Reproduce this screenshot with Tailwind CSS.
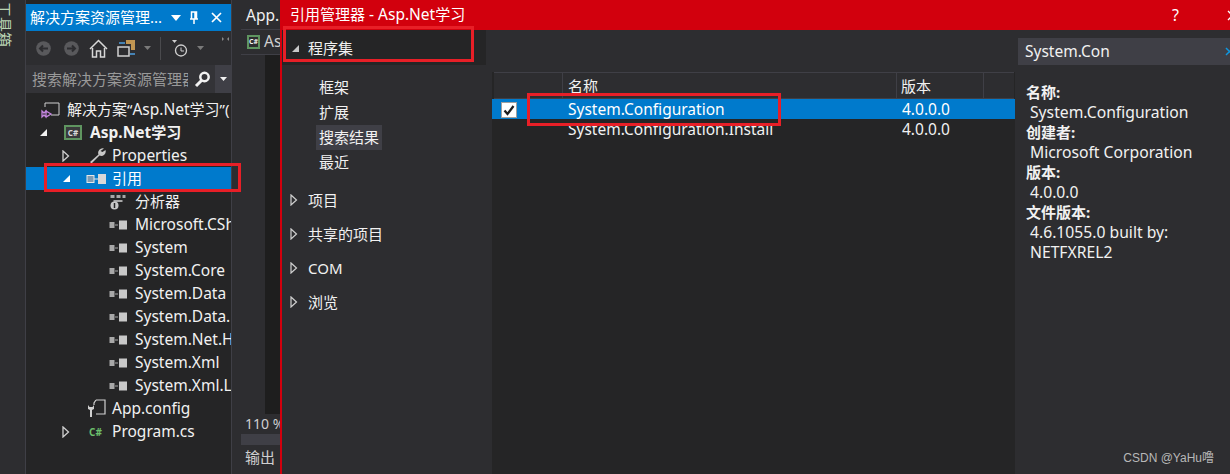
<!DOCTYPE html>
<html lang="zh-CN">
<head>
    <meta charset="UTF-8">
    <title>引用管理器</title>
    <script src="https://cdn.jsdelivr.net/npm/@tailwindcss/browser@4"></script>
</head>
<body class="w-[1230px] h-[474px] overflow-hidden bg-[#2d2d30] text-[#f1f1f1] text-[15.5px] font-['Noto_Sans','Noto_Sans_CJK_SC',sans-serif]">
<div class="relative flex h-[474px]">

    <!-- toolbox strip -->
    <div class="w-[26px] shrink-0 border-r border-[#3f3f46] overflow-hidden">
        <div class="-ml-[4px] pt-[2px] w-[18px] text-[#b9d4b4] text-[15px] leading-[18px] [writing-mode:vertical-rl] [text-orientation:sideways]">工具箱</div>
    </div>

    <!-- solution explorer -->
    <div class="w-[206px] shrink-0 flex flex-col border-r border-[#3f3f46] bg-[#252526] overflow-hidden [&_svg]:shrink-0">
        <div class="h-[27px] mt-[4px] shrink-0 bg-[#007acc] flex items-center pl-[4px] pr-[9px] text-white">
            <span class="flex-1 text-[15px] whitespace-nowrap">解决方案资源管理...</span>
            <svg width="10" height="6" class="mr-[8px]"><path d="M0 0h10L5 6z" fill="#fff"/></svg>
            <svg width="10" height="14" class="mr-[12px]" viewBox="0 0 10 14"><path d="M2.500 1h5v7h-5zM1 8h8M5 8v5M6 1v7" stroke="#fff" stroke-width="1.500" fill="none"/></svg>
            <svg width="11" height="11"><path d="M1 1l9 9M10 1l-9 9" stroke="#fff" stroke-width="1.700"/></svg>
        </div>
        <div class="h-[34px] shrink-0 bg-[#2d2d30] flex items-center pl-[10px]">
            <svg width="15" height="15"><circle cx="7.500" cy="7.500" r="7.300" fill="#59595c"/><path d="M12 7.500H4M7 4.500l-3 3 3 3" stroke="#2d2d30" stroke-width="2" fill="none"/></svg>
            <svg width="15" height="15" class="ml-[13px]"><circle cx="7.500" cy="7.500" r="7.300" fill="#59595c"/><path d="M3 7.500h8M8 4.500l3 3-3 3" stroke="#2d2d30" stroke-width="2" fill="none"/></svg>
            <svg width="19" height="19" class="ml-[10px]" viewBox="0 0 19 19"><path d="M1 10l8.500-8.500L18 10" stroke="#d8d8d8" stroke-width="1.500" fill="none"/><path d="M3.500 9v9h4v-6h4v6h4V9" stroke="#d8d8d8" stroke-width="1.500" fill="none"/></svg>
            <svg width="19" height="18" class="ml-[9px]" viewBox="0 0 19 18"><path d="M1 8h11v9H1z" stroke="#d0d0d0" stroke-width="1.500" fill="none"/><path d="M9 1h9v10h-4V5H9z" fill="#c09552"/><path d="M2 4h6M13 15h5" stroke="#4d9fe0" stroke-width="1.500"/></svg>
            <svg width="7" height="4" class="ml-[8px]"><path d="M0 0h7L3.500 4z" fill="#7a7a7a"/></svg>
            <div class="w-px h-[23px] bg-[#4a4a4d] ml-[9px]"></div>
            <svg width="19" height="19" class="ml-[10px]" viewBox="0 0 19 19"><circle cx="10" cy="11.500" r="5.500" stroke="#d0d0d0" stroke-width="1.300" fill="none"/><path d="M10 8.500v3.500h3" stroke="#d0d0d0" fill="none"/><path d="M1 1h5L3.500 4z" fill="#d0d0d0"/></svg>
            <svg width="7" height="4" class="ml-[7px]"><path d="M0 0h7L3.500 4z" fill="#7a7a7a"/></svg>
            <svg width="7" height="5" class="ml-[18px] -mt-[18px]"><path d="M0 0l2 2-2 2zM7 0L5 2l2 2z" fill="#8a8a8a"/></svg>
        </div>
        <div class="h-[28px] shrink-0 bg-[#333337] flex items-center">
            <span class="w-[162px] pl-[6px] overflow-hidden whitespace-nowrap text-[15px] text-[#999999]">搜索解决方案资源管理器</span>
            <div class="w-[25px] ml-[2px] h-full flex items-center justify-center">
                <svg width="17" height="17" viewBox="0 0 17 17"><circle cx="10.500" cy="6" r="4.200" stroke="#f1f1f1" stroke-width="2.500" fill="none"/><path d="M7.500 9.500L2 15" stroke="#f1f1f1" stroke-width="3"/></svg>
            </div>
            <div class="flex-1 h-full bg-[#3f3f46] flex items-center justify-center">
                <svg width="7" height="4"><path d="M0 0h7L3.500 4z" fill="#f1f1f1"/></svg>
            </div>
        </div>

        <div class="pt-[5px] flex flex-col whitespace-nowrap">
            <div class="h-[23px] flex items-center pl-[15px] gap-[6px]">
                <svg width="20" height="18" viewBox="0 0 20 18"><path d="M4 6V2h14v12H10" stroke="#d0d0d0" fill="none"/><path d="M1 10l2 2 2-2v6l-2-2-2 2zM5 10l5 3-5 3z" fill="none" stroke="#c586e0" stroke-width="1.300"/></svg>
                <span><span class="text-[15px]">解决方案“</span>Asp.Net<span class="text-[15px]">学习”(</span></span>
            </div>
            <div class="h-[23px] flex items-center pl-[13px]">
                <svg width="9" height="9"><path d="M8 1v7H1z" fill="#f1f1f1"/></svg>
                <div class="ml-[16px] w-[18px] h-[15px] border-2 border-[#5f9560] bg-[#3a3a3c] text-[8px] font-bold leading-[11px] text-center text-[#d8d8d8]">C#</div>
                <b class="ml-[8px]">Asp.Net<span class="text-[15px]">学习</span></b>
            </div>
            <div class="h-[23px] flex items-center pl-[36px]">
                <svg width="8" height="12"><path d="M1 1l5.500 5L1 11z" fill="none" stroke="#d0d0d0" stroke-width="1.300"/></svg>
                <svg width="18" height="18" viewBox="0 0 18 18" class="ml-[18px]"><path d="M16 1.500a4.500 4.500 0 0 0-5.500 6L2 15l1.500 1.500 8-8a4.500 4.500 0 0 0 6-5.500l-3 2-2-1z" fill="#c8c8c8"/></svg>
                <span class="ml-[6px]">Properties</span>
            </div>
            <div class="h-[23px] flex items-center pl-[36px] bg-[#007acc] text-white">
                <svg width="9" height="9"><path d="M8 1v7H1z" fill="#fff"/></svg>
                <svg width="20" height="12" viewBox="0 0 20 12" class="ml-[15px]"><rect x="1" y="2.500" width="7" height="7" fill="#7d9cb4" stroke="#e8e8e8"/><path d="M8 6h4" stroke="#e8e8e8"/><rect x="12" y="1" width="8" height="10" fill="#d8d8d8"/></svg>
                <span class="ml-[6px] text-[15px]">引用</span>
            </div>
            <div class="h-[23px] flex items-center pl-[83px]">
                <svg width="18" height="16" viewBox="0 0 17 16"><path d="M1 1h4v3H1zM7 1h4v3H7zM13 1h3v3h-3zM4 6h9v2H4z" fill="#a8a8a8"/><circle cx="5" cy="11.500" r="4" fill="#c8c8c8"/><path d="M5 9v5" stroke="#252526" stroke-width="1.500"/></svg>
                <span class="ml-[8px] text-[15px]">分析器</span>
            </div>
            <div class="h-[23px] flex items-center pl-[83px]"><svg width="19" height="10" viewBox="0 0 19 10"><rect x="0.500" y="2" width="5" height="6" fill="#a8a8a8"/><path d="M6 5h3" stroke="#a8a8a8"/><rect x="10" y="0.500" width="8" height="9" fill="#c8c8c8"/></svg><span class="ml-[7px]">Microsoft.CSharp</span></div>
            <div class="h-[23px] flex items-center pl-[83px]"><svg width="19" height="10" viewBox="0 0 19 10"><rect x="0.500" y="2" width="5" height="6" fill="#a8a8a8"/><path d="M6 5h3" stroke="#a8a8a8"/><rect x="10" y="0.500" width="8" height="9" fill="#c8c8c8"/></svg><span class="ml-[7px]">System</span></div>
            <div class="h-[23px] flex items-center pl-[83px]"><svg width="19" height="10" viewBox="0 0 19 10"><rect x="0.500" y="2" width="5" height="6" fill="#a8a8a8"/><path d="M6 5h3" stroke="#a8a8a8"/><rect x="10" y="0.500" width="8" height="9" fill="#c8c8c8"/></svg><span class="ml-[7px]">System.Core</span></div>
            <div class="h-[23px] flex items-center pl-[83px]"><svg width="19" height="10" viewBox="0 0 19 10"><rect x="0.500" y="2" width="5" height="6" fill="#a8a8a8"/><path d="M6 5h3" stroke="#a8a8a8"/><rect x="10" y="0.500" width="8" height="9" fill="#c8c8c8"/></svg><span class="ml-[7px]">System.Data</span></div>
            <div class="h-[23px] flex items-center pl-[83px]"><svg width="19" height="10" viewBox="0 0 19 10"><rect x="0.500" y="2" width="5" height="6" fill="#a8a8a8"/><path d="M6 5h3" stroke="#a8a8a8"/><rect x="10" y="0.500" width="8" height="9" fill="#c8c8c8"/></svg><span class="ml-[7px]">System.Data.DataSet</span></div>
            <div class="h-[23px] flex items-center pl-[83px]"><svg width="19" height="10" viewBox="0 0 19 10"><rect x="0.500" y="2" width="5" height="6" fill="#a8a8a8"/><path d="M6 5h3" stroke="#a8a8a8"/><rect x="10" y="0.500" width="8" height="9" fill="#c8c8c8"/></svg><span class="ml-[7px]">System.Net.Http</span></div>
            <div class="h-[23px] flex items-center pl-[83px]"><svg width="19" height="10" viewBox="0 0 19 10"><rect x="0.500" y="2" width="5" height="6" fill="#a8a8a8"/><path d="M6 5h3" stroke="#a8a8a8"/><rect x="10" y="0.500" width="8" height="9" fill="#c8c8c8"/></svg><span class="ml-[7px]">System.Xml</span></div>
            <div class="h-[23px] flex items-center pl-[83px]"><svg width="19" height="10" viewBox="0 0 19 10"><rect x="0.500" y="2" width="5" height="6" fill="#a8a8a8"/><path d="M6 5h3" stroke="#a8a8a8"/><rect x="10" y="0.500" width="8" height="9" fill="#c8c8c8"/></svg><span class="ml-[7px]">System.Xml.Linq</span></div>
            <div class="h-[23px] flex items-center pl-[61px]">
                <svg width="19" height="19" viewBox="0 0 19 19"><path d="M9 1h9v14H9M9 1L7 4v2" stroke="#d0d0d0" stroke-width="1.200" fill="none"/><path d="M1 6v4l2 1v7h2v-7l2-1V6L5.500 8h-3z" fill="#d0d0d0"/></svg>
                <span class="ml-[6px]">App.config</span>
            </div>
            <div class="h-[23px] flex items-center pl-[36px]">
                <svg width="8" height="12"><path d="M1 1l5.500 5L1 11z" fill="none" stroke="#d0d0d0" stroke-width="1.300"/></svg>
                <b class="ml-[19px] w-[19px] text-[10px] leading-none text-[#6cbf6c]">C#</b>
                <span class="ml-[4px]">Program.cs</span>
            </div>
        </div>
    </div>

    <!-- editor sliver behind the dialog -->
    <div class="w-[9px] shrink-0"></div>
    <div class="w-[39px] shrink-0 flex flex-col overflow-hidden whitespace-nowrap">
        <div class="h-[29px] pt-[4px] pl-[5px]">App.</div>
        <div class="h-[26px] flex items-center border-y border-[#3f3f46] pl-[6px]">
            <span class="w-[15px] h-[14px] border-2 border-[#5f9560] text-[7px] font-bold leading-[10px] text-center">C#</span>
            <span class="ml-[4px] text-[#d0d0d0]">As</span>
        </div>
        <div class="h-[359px] flex">
            <div class="w-[24px]"></div>
            <div class="flex-1 bg-[#1e1e1e]"></div>
        </div>
        <div class="h-[20px] text-[14px] leading-[20px] pl-[4px] text-[#d0d0d0]">110 %</div>
        <div class="h-[11px] bg-[#3f3f46]"></div>
        <div class="flex-1 pl-[4px] pt-[1px] text-[15px] text-[#d0d0d0]">输出</div>
    </div>

    <!-- reference manager dialog -->
    <div class="w-[950px] shrink-0 flex flex-col border-l-2 border-[#d2000d] bg-[#2d2d30]">
        <div class="h-[30px] shrink-0 -ml-[1px] bg-[#d2000d] flex items-center pl-[9px] text-white">
            <span class="flex-1"><span class="text-[15px]">引用管理器</span> - Asp.Net<span class="text-[15px]">学习</span></span>
            <span class="mr-[48px] text-[16px]">?</span>
            <svg width="11" height="11" class="-mr-[8px]"><path d="M1 1l9 9M10 1l-9 9" stroke="#fff" stroke-width="1.300"/></svg>
        </div>
        <div class="flex flex-1 min-h-0">
            <div class="w-[210px] shrink-0 text-[15px]">
                <div class="h-[35px] pt-[1px] flex items-center w-[204px] bg-[#252526] pl-[9px]">
                    <svg width="9" height="9"><path d="M8 1v7H1z" fill="#c8c8c8"/></svg>
                    <span class="ml-[8px]">程序集</span>
                </div>
                <div class="mt-[10px] pl-[37px] flex flex-col items-start">
                    <div class="h-[25px] leading-[25px] px-[3px] -ml-[3px]">框架</div>
                    <div class="h-[25px] leading-[25px] px-[3px] -ml-[3px]">扩展</div>
                    <div class="h-[25px] leading-[25px] px-[3px] -ml-[3px] bg-[#3f3f46]">搜索结果</div>
                    <div class="h-[25px] leading-[25px] px-[3px] -ml-[3px]">最近</div>
                </div>
                <div class="mt-[8px] flex flex-col">
                    <div class="h-[34px] flex items-center pl-[8px]"><svg width="8" height="12"><path d="M1 1l5.500 5L1 11z" fill="none" stroke="#d0d0d0" stroke-width="1.200"/></svg><span class="ml-[10px]">项目</span></div>
                    <div class="h-[34px] flex items-center pl-[8px]"><svg width="8" height="12"><path d="M1 1l5.500 5L1 11z" fill="none" stroke="#d0d0d0" stroke-width="1.200"/></svg><span class="ml-[10px]">共享的项目</span></div>
                    <div class="h-[34px] flex items-center pl-[8px]"><svg width="8" height="12"><path d="M1 1l5.500 5L1 11z" fill="none" stroke="#d0d0d0" stroke-width="1.200"/></svg><span class="ml-[10px]">COM</span></div>
                    <div class="h-[34px] flex items-center pl-[8px]"><svg width="8" height="12"><path d="M1 1l5.500 5L1 11z" fill="none" stroke="#d0d0d0" stroke-width="1.200"/></svg><span class="ml-[10px]">浏览</span></div>
                </div>
            </div>

            <div class="w-[523px] shrink-0 mt-[42px] bg-[#252526]">
                <div class="h-[27px] flex border-t border-b border-[#3f3f46] bg-[#2d2d30] leading-[26px] w-[520px] ml-[2px] text-[15px]">
                    <div class="w-[69px] border-r border-[#3f3f46]"></div>
                    <div class="w-[334px] pl-[5px] border-r border-[#3f3f46]">名称</div>
                    <div class="w-[87px] pl-[4px] border-r border-[#3f3f46]">版本</div>
                </div>
                <div class="h-[20px] pt-[2px] flex items-center bg-[#007acc] text-white">
                    <div class="w-[76px] pl-[9px]">
                        <div class="w-[16px] h-[16px] border border-[#a0a0a0] bg-white flex items-center justify-center">
                            <svg width="12" height="11" viewBox="0 0 12 11"><path d="M1.500 5.500l3 3.500 6-8" stroke="#1e1e1e" stroke-width="2.300" fill="none"/></svg>
                        </div>
                    </div>
                    <div class="w-[334px]">System.Configuration</div>
                    <div>4.0.0.0</div>
                </div>
                <div class="h-[20px] pt-[2px] flex items-center">
                    <div class="w-[76px]"></div>
                    <div class="w-[334px]">System.Configuration.Install</div>
                    <div>4.0.0.0</div>
                </div>
            </div>

            <div class="flex-1 min-w-0 pt-[8px]">
                <div class="ml-[3px] h-[27px] bg-[#3f3f46] flex items-center pl-[7px] overflow-hidden whitespace-nowrap">System.Con<svg width="9" height="9" class="ml-[115px] shrink-0"><path d="M1 1l7 7M8 1l-7 7" stroke="#0e97e0" stroke-width="1.500"/></svg></div>
                <div class="mt-[17px] pl-[11px] text-[15.700px] leading-[20px]">
                    <div class="font-bold text-[15px]">名称:</div>
                    <div class="pl-[4px]">System.Configuration</div>
                    <div class="font-bold text-[15px]">创建者:</div>
                    <div class="pl-[4px]">Microsoft Corporation</div>
                    <div class="font-bold text-[15px]">版本:</div>
                    <div class="pl-[4px]">4.0.0.0</div>
                    <div class="font-bold text-[15px]">文件版本:</div>
                    <div class="pl-[4px]">4.6.1055.0 built by:</div>
                    <div class="pl-[4px]">NETFXREL2</div>
                </div>
            </div>
        </div>
    </div>

    <!-- red annotation boxes and watermark -->
    <div class="absolute left-[44px] top-[163px] w-[197px] h-[29px] border-[3px] border-[#e81f27]"></div>
    <div class="absolute left-[283px] top-[26px] w-[191px] h-[36px] border-[3px] border-[#e81f27]"></div>
    <div class="absolute left-[527px] top-[93px] w-[254px] h-[33px] border-[3px] border-[#e81f27]"></div>
    <div class="absolute right-[16px] top-[450px] text-[12px] leading-[16px] text-[#b8b8b8] font-['Liberation_Sans','Noto_Sans_CJK_SC',sans-serif]">CSDN @YaHu噜</div>
</div>
</body>
</html>
